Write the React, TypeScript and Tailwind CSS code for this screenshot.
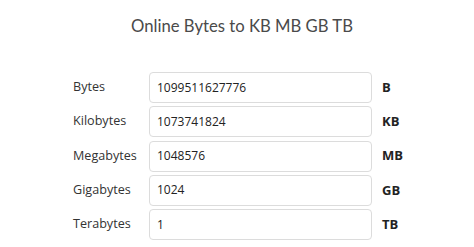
import React from "react";

const rows = [
  { label: "Bytes", value: "1099511627776", unit: "B" },
  { label: "Kilobytes", value: "1073741824", unit: "KB" },
  { label: "Megabytes", value: "1048576", unit: "MB" },
  { label: "Gigabytes", value: "1024", unit: "GB" },
  { label: "Terabytes", value: "1", unit: "TB" },
];

export default function App() {
  return (
    <div className="w-[474px] h-[247px] bg-white overflow-hidden" style={{ fontFamily: '"Open Sans", "Noto Sans", sans-serif' }}>
      <h1 className="text-center text-[16.7px] leading-[24px] text-[#4a4a4a] pt-[14px] pl-[10px] font-normal" style={{ fontFamily: 'Lato, "Open Sans", sans-serif' }}>
        Online Bytes to KB MB GB TB
      </h1>
      <div className="flex flex-col gap-[3.3px] pt-[34px] pl-[73px]">
        {rows.map((r) => (
          <div key={r.unit} className="flex items-center h-[31px]">
            <div className="w-[76px] text-[12.6px] text-[#333]">{r.label}</div>
            <div className="w-[223px] h-[31px] border border-[#dcdcdc] rounded-[4px] flex items-center pl-[7px] text-[12px] text-[#222]">
              {r.value}
            </div>
            <div className="pl-[10px] text-[13px] font-bold text-[#222]">{r.unit}</div>
          </div>
        ))}
      </div>
    </div>
  );
}
